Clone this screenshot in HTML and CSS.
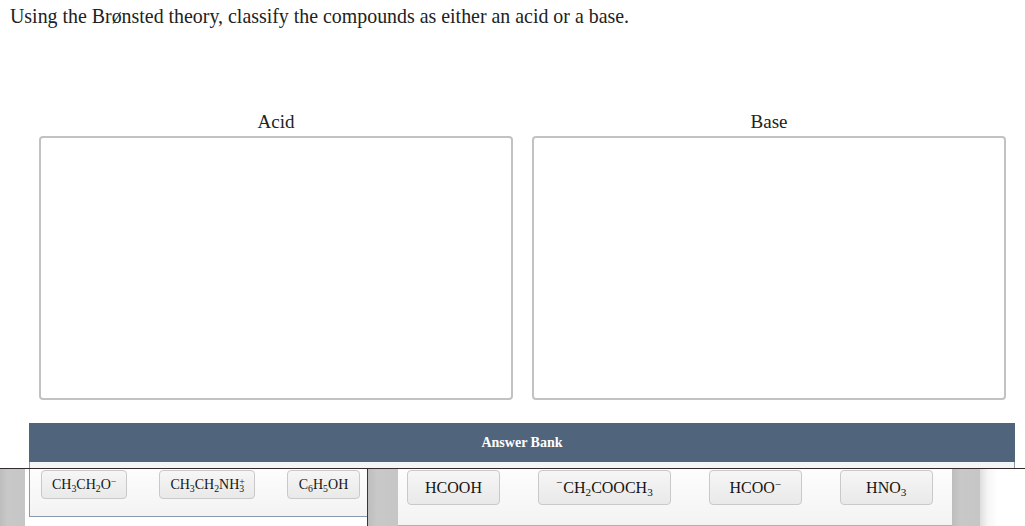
FILE: index.html
```html
<!DOCTYPE html>
<html lang="en">
<head>
<meta charset="utf-8">
<title>Brønsted classification</title>
<link rel="stylesheet" href="styles.css">
</head>
<body>
  <p class="prompt">Using the Brønsted theory, classify the compounds as either an acid or a base.</p>

  <div class="columns">
    <div class="column">
      <div class="col-title">Acid</div>
      <div class="drop"></div>
    </div>
    <div class="column">
      <div class="col-title">Base</div>
      <div class="drop"></div>
    </div>
  </div>

  <div class="bank">
    <div class="bank-head">Answer Bank</div>
    <div class="bank-strip"></div>
  </div>

  <div class="tray">
    <div class="gutter gutter-left"></div>
    <div class="gap"></div>
    <div class="panel panel-small">
      <span class="chip"><span class="f">CH<sub>3</sub>CH<sub>2</sub>O<sup>−</sup></span></span>
      <span class="chip"><span class="f">CH<sub>3</sub>CH<sub>2</sub>NH<span class="stack"><span class="stack-top">+</span><span class="stack-bottom">3</span></span></span></span>
      <span class="chip"><span class="f">C<sub>6</sub>H<sub>5</sub>OH</span></span>
    </div>
    <div class="divider"></div>
    <div class="gutter gutter-mid"></div>
    <div class="panel panel-large">
      <span class="chip"><span class="f">HCOOH</span></span>
      <span class="chip"><span class="f"><sup class="lead">−</sup>CH<sub>2</sub>COOCH<sub>3</sub></span></span>
      <span class="chip"><span class="f">HCOO<sup>−</sup></span></span>
      <span class="chip"><span class="f">HNO<sub>3</sub></span></span>
    </div>
    <div class="gutter gutter-right"></div>
    <div class="edge"></div>
  </div>
</body>
</html>
```

FILE: styles.css
```css
* {
  box-sizing: border-box;
}

html, body {
  margin: 0;
  padding: 0;
  background: #ffffff;
  overflow: hidden;
}

body {
  width: 1025px;
  height: 526px;
  font-family: "Liberation Serif", "Times New Roman", serif;
  color: #222222;
}

.prompt {
  margin: 0;
  padding: 5px 10px 0;
  font-size: 19.9px;
  line-height: 23px;
}

/* two drop targets with a heading over each */
.columns {
  display: grid;
  grid-template-columns: 474px 474px;
  column-gap: 19px;
  margin: 83px 0 0 39px;
}

.col-title {
  text-align: center;
  font-size: 19px;
  line-height: 22px;
  margin-bottom: 3px;
}

.drop {
  height: 264px;
  border: 2px solid #c2c2c2;
  border-radius: 4px;
  background: #ffffff;
}

/* answer bank header */
.bank {
  width: 986px;
  margin: 23px 0 0 29px;
}

.bank-head {
  height: 39px;
  line-height: 39px;
  background: #50647c;
  color: #ffffff;
  font-weight: bold;
  font-size: 14px;
  text-align: center;
}

.bank-strip {
  height: 6px;
  background: #f4f5f7;
  border-left: 1px solid #8a99ac;
  border-right: 1px solid #8a99ac;
}

/* tray of draggable compounds */
.tray {
  display: flex;
  height: 58px;
  border-top: 1px solid #332a2a;
}

.gutter {
  background: linear-gradient(to right, #bdbdbd, #c8c8c8 30%, #c6c6c6);
}

.gutter-left {
  width: 25px;
}

.gap {
  width: 4px;
}

.gutter-mid {
  width: 30px;
}

.gutter-right {
  width: 28px;
}

.edge {
  flex: 1;
  background: linear-gradient(to right, #dedede, #f6f6f6 8px, #ffffff 18px);
}

.divider {
  width: 1px;
  background: #3a3434;
}

.panel {
  display: flex;
  align-items: flex-start;
  padding-top: 1px;
  background: linear-gradient(to bottom, #fdfdfd, #f3f3f3);
}

.panel-small {
  width: 338px;
  height: 48px;
  padding-left: 11px;
  gap: 32px;
  border-left: 1px solid #8a99ac;
  border-bottom: 1px solid #8a99ac;
}

.panel-large {
  width: 554px;
  height: 57px;
  padding-left: 9px;
  gap: 38px;
  border-bottom: 1px solid #a9b3bf;
}

.chip {
  display: inline-flex;
  align-items: center;
  justify-content: center;
  white-space: nowrap;
  border: 1px solid #c9c9c9;
  border-radius: 4px;
  background: linear-gradient(to bottom, #f6f6f6, #e9e9e9);
  color: #151515;
}

.panel-small .chip {
  height: 29px;
  padding: 0 10px;
  font-size: 14px;
}

.panel-small .chip:last-child {
  padding: 0 11px;
}

.panel-large .chip {
  height: 35px;
  min-width: 93px;
  padding: 0 17px;
  font-size: 16px;
}

.f {
  display: inline-block;
  line-height: 1;
}

.f sub {
  font-size: 0.7em;
  line-height: 0;
  vertical-align: -0.3em;
}

.f sup {
  font-size: 0.7em;
  line-height: 0;
  vertical-align: 0.45em;
}

.f sup.lead {
  vertical-align: 0.6em;
  margin-right: 1px;
}

/* charge stacked over the subscript count */
.stack {
  display: inline-block;
  position: relative;
  width: 0.45em;
  height: 1em;
  vertical-align: -0.3em;
  font-size: 0.7em;
}

.stack-top,
.stack-bottom {
  position: absolute;
  left: 0;
  line-height: 1;
}

.stack-top {
  top: -0.45em;
}

.stack-bottom {
  top: 0.2em;
}
```
